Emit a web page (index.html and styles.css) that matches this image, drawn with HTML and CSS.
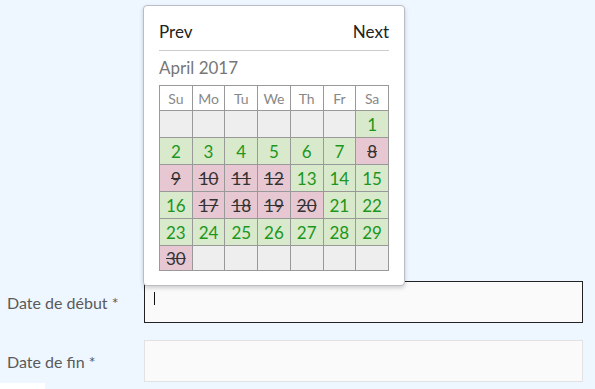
FILE: index.html
```html
<!DOCTYPE html>
<html lang="fr">
<head>
  <meta charset="UTF-8" />
  <title>Réservation</title>
  <link rel="stylesheet" href="styles.css">
</head>
<body>
  <main class="form">
    <div class="field">
      <label>Date de début *</label>
      <div class="input focused"><span class="caret"></span></div>
    </div>
    <div class="field">
      <label>Date de fin *</label>
      <div class="input"></div>
    </div>
    <div class="foot"></div>
  </main>

  <div class="datepicker">
    <div class="dp-nav">
      <a>Prev</a>
      <a>Next</a>
    </div>
    <div class="dp-title">April 2017</div>
    <table class="dp-table">
      <thead>
        <tr><th>Su</th><th>Mo</th><th>Tu</th><th>We</th><th>Th</th><th>Fr</th><th>Sa</th></tr>
      </thead>
      <tbody>
        <tr><td class="empty"></td><td class="empty"></td><td class="empty"></td><td class="empty"></td><td class="empty"></td><td class="empty"></td><td class="free">1</td></tr>
        <tr><td class="free">2</td><td class="free">3</td><td class="free">4</td><td class="free">5</td><td class="free">6</td><td class="free">7</td><td class="busy">8</td></tr>
        <tr><td class="busy">9</td><td class="busy">10</td><td class="busy">11</td><td class="busy">12</td><td class="free">13</td><td class="free">14</td><td class="free">15</td></tr>
        <tr><td class="free">16</td><td class="busy">17</td><td class="busy">18</td><td class="busy">19</td><td class="busy">20</td><td class="free">21</td><td class="free">22</td></tr>
        <tr><td class="free">23</td><td class="free">24</td><td class="free">25</td><td class="free">26</td><td class="free">27</td><td class="free">28</td><td class="free">29</td></tr>
        <tr class="last"><td class="busy">30</td><td class="empty"></td><td class="empty"></td><td class="empty"></td><td class="empty"></td><td class="empty"></td><td class="empty"></td></tr>
      </tbody>
    </table>
  </div>
</body>
</html>
```

FILE: styles.css
```css
* {
  box-sizing: border-box;
  font-family: Lato, "Open Sans", sans-serif;
}
body {
  margin: 0;
  background: #eef6ff;
  color: #555;
  width: 595px;
  height: 389px;
  overflow: hidden;
  position: relative;
}
.form {
  padding-top: 281px;
  display: flex;
  flex-direction: column;
  gap: 17px;
}
.field {
  display: flex;
  align-items: center;
  padding-right: 12px;
}
.field label {
  width: 144px;
  padding-left: 7px;
  font-size: 16px;
  color: #5a5a5a;
}
.input {
  flex: 1;
  height: 42px;
  background: #fafafa;
  border: 1px solid #e2e2e2;
  padding: 10px 9px;
}
.input.focused {
  border-color: #222;
}
.caret {
  display: block;
  width: 1px;
  height: 13px;
  background: #111;
}
.foot {
  width: 45px;
  height: 6px;
  background: #fff;
  margin-top: -16px;
}
.datepicker {
  position: absolute;
  left: 143px;
  top: 5px;
  width: 262px;
  height: 281px;
  background: #fff;
  border: 1px solid #b9bec4;
  border-radius: 4px;
  box-shadow: 0 2px 4px rgba(0,0,0,0.18);
  padding: 16px 15px 0 15px;
}
.dp-nav {
  display: flex;
  justify-content: space-between;
  font-size: 17px;
  color: #222;
  line-height: 20px;
  padding-bottom: 8px;
  border-bottom: 1px solid #ccc;
}
.dp-title {
  font-size: 17px;
  color: #777;
  line-height: 20px;
  margin: 7px 0 7px 0;
}
.dp-table {
  width: 230px;
  border-collapse: collapse;
  table-layout: fixed;
  border: 1px solid #999;
}
.dp-table th {
  height: 25px;
  font-size: 14px;
  font-weight: normal;
  color: #888;
  border: 1px solid #999;
  background: #fff;
  padding: 0;
}
.dp-table td {
  height: 27px;
  font-size: 17px;
  text-align: center;
  border: 1px solid #999;
  padding: 0;
}
.dp-table tr.last td {
  height: 25px;
}
.dp-table td.empty {
  background: #eee;
}
.dp-table td.free {
  background: #d8e9cc;
  color: #1c961c;
}
.dp-table td.busy {
  background: #e7c7d2;
  color: #333;
  text-decoration: line-through;
}
```
